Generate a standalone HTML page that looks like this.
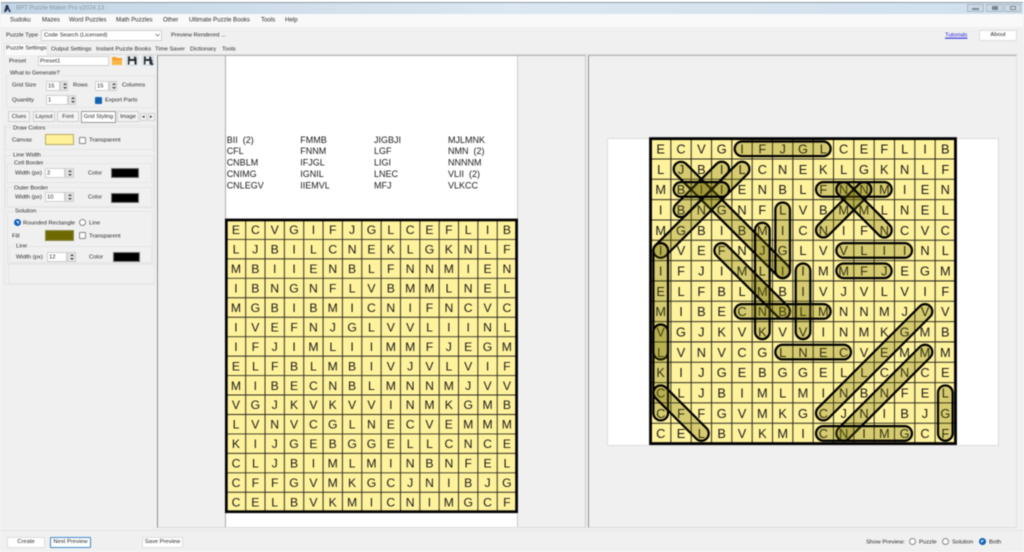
<!DOCTYPE html>
<html><head><meta charset="utf-8"><style>
html,body{margin:0;padding:0}
body{width:1024px;height:552px;overflow:hidden;background:#fff;position:relative;font-family:"Liberation Sans",sans-serif}
#w{position:absolute;left:0;top:0;width:1024px;height:552px;background:#f0f0f0;filter:blur(.45px);overflow:hidden}
#w div{position:absolute;box-sizing:border-box}
.t{white-space:nowrap;font-size:5.9px;line-height:8px;color:#2a2a2a;transform:translateY(.7px)}
.m{font-size:6.1px}
.i{background:#fff;border:1px solid #d0d0d0}
.sp{background:#e4e4e4;border:1px solid #d0d0d0}
.sp:before{content:"";position:absolute;left:2px;top:1px;border:2px solid transparent;border-top:0;border-bottom:2px solid #444}
.sp:after{content:"";position:absolute;left:2px;bottom:1px;border:2px solid transparent;border-bottom:0;border-top:2px solid #444}
.c{width:7px;height:7px;background:#fff;border:1px solid #888;border-radius:1px}
.r{width:7px;height:7px;background:#fff;border:1px solid #888;border-radius:50%}
.on{border:2px solid #0a5fb8;background:#fff}
.on:after{content:"";position:absolute;left:.5px;top:.5px;width:2px;height:2px;border-radius:50%;background:#0a5fb8}
.g{border:1px solid #e6e6e6}
.b{background:#fff;border:1px solid #dcdcdc;border-radius:1px;font-size:5.8px;line-height:9px;text-align:center;color:#2a2a2a;white-space:nowrap}
.k{background:#000;border:1px solid #777}
.st{background:#f4f4f4;border:1px solid #cfcfcf;font-size:5.7px;line-height:10px;text-align:center;color:#2a2a2a;white-space:nowrap}
svg{position:absolute;overflow:visible}
.L{font:63px "Liberation Sans",sans-serif;fill:#1a1a1a;text-anchor:middle}
.W{font:9px "Liberation Sans",sans-serif;fill:#1a1a1a}
.C rect{fill:#6b6800;fill-opacity:.28;stroke:#000;stroke-opacity:1;stroke-width:11}
</style></head><body><div id="w">

<div style="left:0;top:0;width:1024px;height:2px;background:#fff"></div>
<div style="left:1px;top:2px;width:1022px;height:12px;background:linear-gradient(90deg,#c3d5e4,#dbe7f1 50%,#cfe0ed);border-top:1px solid #8f9aa3"></div>
<svg style="left:3px;top:4px" width="10" height="9" viewBox="0 0 10 9"><path d="M1 8L3 1h2l1 3 2 4H6L5 5 3 8z" fill="#2c3350"/></svg>
<div class="t" style="left:16px;top:4px;color:#8b98a2;font-size:6.1px">BPT Puzzle Maker Pro v2024.13</div>
<div style="left:967px;top:4px;width:17px;height:8px;border:1px solid #a9b8c4;background:#cbd9e4"></div>
<div style="left:986px;top:4px;width:17px;height:8px;border:1px solid #a9b8c4;background:#cbd9e4"></div>
<div style="left:1004px;top:4px;width:17px;height:8px;border:1px solid #a9b8c4;background:#cbd9e4"></div>
<div style="left:972px;top:8px;width:7px;height:2px;border:1px solid #808c96"></div>
<div style="left:992px;top:6px;width:6px;height:4px;background:#7a8690"></div>
<div style="left:1010px;top:6px;width:6px;height:4px;border:1px solid #808c96"></div>

<div style="left:1px;top:14px;width:1022px;height:13px;background:#f9f9f9"></div>
<div class="t m" style="left:10px;top:16px">Sudoku</div>
<div class="t m" style="left:42px;top:16px">Mazes</div>
<div class="t m" style="left:69px;top:16px">Word Puzzles</div>
<div class="t m" style="left:116px;top:16px">Math Puzzles</div>
<div class="t m" style="left:163px;top:16px">Other</div>
<div class="t m" style="left:189px;top:16px">Ultimate Puzzle Books</div>
<div class="t m" style="left:261px;top:16px">Tools</div>
<div class="t m" style="left:285px;top:16px">Help</div>

<div class="t" style="left:6px;top:30.5px">Puzzle Type</div>
<div class="i" style="left:41px;top:30px;width:121px;height:10.5px"></div>
<div class="t" style="left:44px;top:31px">Code Search (Licensed)</div>
<svg style="left:155px;top:33px" width="5" height="4" viewBox="0 0 5 4"><path d="M.5 1L2.5 3 4.500 1" fill="none" stroke="#666" stroke-width=".7"/></svg>
<div class="t" style="left:171px;top:30.5px">Preview Rendered ...</div>
<div class="t" style="left:945px;top:31px;color:#1c1cd8;text-decoration:underline">Tutorials</div>
<div class="b" style="left:979px;top:30px;width:38px;height:10.5px">About</div>

<div style="left:4px;top:43px;width:44px;height:12px;background:#fafafa;border:1px solid #e2e2e2;border-bottom:0"></div>
<div class="t" style="left:6px;top:44px">Puzzle Settings</div>
<div class="t" style="left:51px;top:44.5px">Output Settings</div>
<div class="t" style="left:96px;top:44.5px">Instant Puzzle Books</div>
<div class="t" style="left:155px;top:44.5px">Time Saver</div>
<div class="t" style="left:190px;top:44.5px">Dictionary</div>
<div class="t" style="left:222px;top:44.5px">Tools</div>

<div style="left:48px;top:54px;width:969px;height:1px;background:#dcdcdc"></div>

<div class="t" style="left:9px;top:56.5px">Preset</div>
<div class="i" style="left:38px;top:55.5px;width:71px;height:10px"></div>
<div class="t" style="left:40px;top:56.5px">Preset1</div>
<svg style="left:111px;top:55px" width="12" height="11" viewBox="0 0 12 11"><path d="M1 2h4l1 1h5v7H1z" fill="#f2a02a"/><path d="M1 5h10v5H1z" fill="#fbb545"/></svg>
<svg style="left:126px;top:55px" width="12" height="11" viewBox="0 0 12 11"><rect width="12" height="11" rx="2" fill="#d6dde3"/><path d="M2 1.5h7l1.5 1.5v6.500h-8.500z" fill="#262c33"/><rect x="4" y="1.500" width="4" height="2.500" fill="#e5e8eb"/><rect x="3.500" y="6" width="5" height="3.500" fill="#f2f4f5"/></svg>
<svg style="left:142px;top:55px" width="12" height="11" viewBox="0 0 12 11"><rect width="12" height="11" rx="2" fill="#d6dde3"/><path d="M2 1.500h6.500l1 1.500v6.500h-7.500z" fill="#262c33"/><rect x="3.800" y="1.500" width="3.500" height="2.500" fill="#e5e8eb"/><rect x="3.500" y="6" width="4" height="3.500" fill="#f2f4f5"/><path d="M10 5v5M8.500 8.500L10 10l1.500-1.500" stroke="#262c33" fill="none" stroke-width=".8"/></svg>

<div class="g" style="left:6px;top:75px;width:149px;height:33px"></div>
<div class="t" style="left:9px;top:69px;background:#f0f0f0;padding:0 1px">What to Generate?</div>
<div class="t" style="left:12px;top:81px">Grid Size</div>
<div class="i" style="left:46px;top:80.500px;width:14px;height:10px"></div>
<div class="t" style="left:48px;top:81.500px">15</div>
<div class="sp" style="left:60px;top:80.500px;width:8px;height:10px"></div>
<div class="t" style="left:73px;top:81px">Rows</div>
<div class="i" style="left:95px;top:80.500px;width:14px;height:10px"></div>
<div class="t" style="left:97px;top:81.500px">15</div>
<div class="sp" style="left:109px;top:80.500px;width:8px;height:10px"></div>
<div class="t" style="left:122px;top:81px">Columns</div>
<div class="t" style="left:12px;top:95.500px">Quantity</div>
<div class="i" style="left:46px;top:95px;width:22px;height:10px"></div>
<div class="t" style="left:48px;top:96px">1</div>
<div class="sp" style="left:68px;top:95px;width:8px;height:10px"></div>
<div style="left:95px;top:96.500px;width:7px;height:7px;background:#1464b4;border-radius:1px"></div>
<div class="t" style="left:105px;top:95.500px">Export Parts</div>

<div class="st" style="left:8px;top:111px;width:22px;height:11px">Clues</div>
<div class="st" style="left:33px;top:111px;width:22px;height:11px">Layout</div>
<div class="st" style="left:57px;top:111px;width:22px;height:11px">Font</div>
<div class="st" style="left:81px;top:110.500px;width:35px;height:12px;background:#fff;border-color:#9a9a9a">Grid Styling</div>
<div class="st" style="left:117px;top:111px;width:22px;height:11px">Image</div>
<div class="st" style="left:140px;top:113px;width:6.500px;height:8px;line-height:7px;font-size:5px">◂</div>
<div class="st" style="left:148px;top:113px;width:6.500px;height:8px;line-height:7px;font-size:5px">▸</div>

<div class="g" style="left:4px;top:125px;width:151px;height:160px"></div>
<div class="g" style="left:5px;top:127px;width:149px;height:23px"></div>
<div class="t" style="left:12px;top:123.500px;background:#f0f0f0;padding:0 1px">Draw Colors</div>
<div class="t" style="left:12px;top:136px">Canvas</div>
<div style="left:45px;top:134px;width:29px;height:11px;background:#fff09a;border:1px solid #b9a96a"></div>
<div class="c" style="left:79px;top:136.500px"></div>
<div class="t" style="left:89px;top:136px">Transparent</div>

<div class="g" style="left:5px;top:155px;width:149px;height:53px"></div>
<div class="t" style="left:12px;top:150.500px;background:#f0f0f0;padding:0 1px">Line Width</div>
<div class="g" style="left:7px;top:163px;width:145px;height:20px"></div>
<div class="t" style="left:13px;top:159px;background:#f0f0f0;padding:0 1px">Cell Border</div>
<div class="t" style="left:15px;top:169px">Width (px)</div>
<div class="i" style="left:45px;top:168px;width:20px;height:10px"></div>
<div class="t" style="left:47px;top:169px">2</div>
<div class="sp" style="left:65px;top:168px;width:9px;height:10px"></div>
<div class="t" style="left:88px;top:169px">Color</div>
<div class="k" style="left:111px;top:168px;width:28px;height:10px"></div>
<div class="g" style="left:7px;top:187px;width:145px;height:20px"></div>
<div class="t" style="left:13px;top:183.500px;background:#f0f0f0;padding:0 1px">Outer Border</div>
<div class="t" style="left:15px;top:193px">Width (px)</div>
<div class="i" style="left:45px;top:192px;width:20px;height:10px"></div>
<div class="t" style="left:47px;top:193px">10</div>
<div class="sp" style="left:65px;top:192px;width:9px;height:10px"></div>
<div class="t" style="left:88px;top:193px">Color</div>
<div class="k" style="left:111px;top:192.500px;width:28px;height:10px"></div>

<div class="g" style="left:7px;top:211px;width:146px;height:53px"></div>
<div class="t" style="left:14px;top:207px;background:#f0f0f0;padding:0 1px">Solution</div>
<div class="r on" style="left:13.500px;top:219px"></div>
<div class="t" style="left:23px;top:219px">Rounded Rectangle</div>
<div class="r" style="left:79px;top:219px"></div>
<div class="t" style="left:89px;top:219px">Line</div>
<div class="t" style="left:12px;top:232px">Fill</div>
<div style="left:45px;top:230px;width:29px;height:11px;background:#6f6a00;border:1px solid #8a8a50"></div>
<div class="c" style="left:79px;top:232px"></div>
<div class="t" style="left:89px;top:232px">Transparent</div>
<div class="g" style="left:9px;top:246px;width:143px;height:17px"></div>
<div class="t" style="left:15px;top:242px;background:#f0f0f0;padding:0 1px">Line</div>
<div class="t" style="left:16px;top:252.500px">Width (px)</div>
<div class="i" style="left:47px;top:251.500px;width:20px;height:10px"></div>
<div class="t" style="left:49px;top:252.500px">12</div>
<div class="sp" style="left:67px;top:251.500px;width:9px;height:10px"></div>
<div class="t" style="left:89px;top:252.500px">Color</div>
<div class="k" style="left:113px;top:251.500px;width:27px;height:10px"></div>
<div class="g" style="left:8px;top:264px;width:147px;height:20px"></div>

<div style="left:157px;top:55px;width:429px;height:473px;border-left:1px solid #8c8c8c;border-top:1px solid #b0b0b0;border-right:1px solid #c8c8c8;border-bottom:1px solid #dcdcdc"></div>
<div style="left:588px;top:55px;width:429px;height:473px;border-left:1px solid #8c8c8c;border-top:1px solid #b0b0b0;border-right:1px solid #e2e2e2;border-bottom:1px solid #dcdcdc"></div>

<div style="left:225px;top:56px;width:293px;height:471px;background:#fff;border-left:1px solid #aaa;border-right:1px solid #ccc"></div>
<div style="left:607px;top:138px;width:392px;height:308px;background:#fff;border:1px solid #ddd"></div>

<svg style="left:0;top:0" width="1024" height="552">
<g class="W">
<text x="226.700" y="142.800">BII&#160; (2)</text><text x="226.700" y="154.200">CFL</text><text x="226.700" y="165.600">CNBLM</text><text x="226.700" y="177">CNIMG</text><text x="226.700" y="188.400">CNLEGV</text>
<text x="300.300" y="142.800">FMMB</text><text x="300.300" y="154.200">FNNM</text><text x="300.300" y="165.600">IFJGL</text><text x="300.300" y="177">IGNIL</text><text x="300.300" y="188.400">IIEMVL</text>
<text x="374" y="142.800">JIGBJI</text><text x="374" y="154.200">LGF</text><text x="374" y="165.600">LIGI</text><text x="374" y="177">LNEC</text><text x="374" y="188.400">MFJ</text>
<text x="448" y="142.800">MJLMNK</text><text x="448" y="154.200">NMN&#160; (2)</text><text x="448" y="165.600">NNNNM</text><text x="448" y="177">VLII&#160; (2)</text><text x="448" y="188.400">VLKCC</text>
</g>

<g transform="translate(236 229.700) scale(.1935 .1945)">
<rect x="-50" y="-50" width="1500" height="1500" fill="#fff29c"/>
<path d="M50-50V1450M150-50V1450M250-50V1450M350-50V1450M450-50V1450M550-50V1450M650-50V1450M750-50V1450M850-50V1450M950-50V1450M1050-50V1450M1150-50V1450M1250-50V1450M1350-50V1450M-50 50H1450M-50 150H1450M-50 250H1450M-50 350H1450M-50 450H1450M-50 550H1450M-50 650H1450M-50 750H1450M-50 850H1450M-50 950H1450M-50 1050H1450M-50 1150H1450M-50 1250H1450M-50 1350H1450" stroke="#2c2c20" stroke-width="5" fill="none"/>
<rect x="-50" y="-50" width="1500" height="1500" fill="none" stroke="#000" stroke-width="14"/>
<g class="L">
<text x="0 100 200 300 400 500 600 700 800 900 1000 1100 1200 1300 1400" y="23">ECVGIFJGLCEFLIB</text>
<text x="0 100 200 300 400 500 600 700 800 900 1000 1100 1200 1300 1400" y="123">LJBILCNEKLGKNLF</text>
<text x="0 100 200 300 400 500 600 700 800 900 1000 1100 1200 1300 1400" y="223">MBIIENBLFNNMIEN</text>
<text x="0 100 200 300 400 500 600 700 800 900 1000 1100 1200 1300 1400" y="323">IBNGNFLVBMMLNEL</text>
<text x="0 100 200 300 400 500 600 700 800 900 1000 1100 1200 1300 1400" y="423">MGBIBMICNIFNCVC</text>
<text x="0 100 200 300 400 500 600 700 800 900 1000 1100 1200 1300 1400" y="523">IVEFNJGLVVLIINL</text>
<text x="0 100 200 300 400 500 600 700 800 900 1000 1100 1200 1300 1400" y="623">IFJIMLIIMMFJEGM</text>
<text x="0 100 200 300 400 500 600 700 800 900 1000 1100 1200 1300 1400" y="723">ELFBLMBIVJVLVIF</text>
<text x="0 100 200 300 400 500 600 700 800 900 1000 1100 1200 1300 1400" y="823">MIBECNBLMNNMJVV</text>
<text x="0 100 200 300 400 500 600 700 800 900 1000 1100 1200 1300 1400" y="923">VGJKVKVVINMKGMB</text>
<text x="0 100 200 300 400 500 600 700 800 900 1000 1100 1200 1300 1400" y="1023">LVNVCGLNECVEMMM</text>
<text x="0 100 200 300 400 500 600 700 800 900 1000 1100 1200 1300 1400" y="1123">KIJGEBGGELLCNCE</text>
<text x="0 100 200 300 400 500 600 700 800 900 1000 1100 1200 1300 1400" y="1223">CLJBIMLMINBNFEL</text>
<text x="0 100 200 300 400 500 600 700 800 900 1000 1100 1200 1300 1400" y="1323">CFFGVMKGCJNIBJG</text>
<text x="0 100 200 300 400 500 600 700 800 900 1000 1100 1200 1300 1400" y="1423">CELBVKMICNIMGCF</text>
</g>
</g>

<g transform="translate(660.700 148.800) scale(.2033)">
<rect x="-50" y="-50" width="1500" height="1500" fill="#fff29c"/>
<path d="M50-50V1450M150-50V1450M250-50V1450M350-50V1450M450-50V1450M550-50V1450M650-50V1450M750-50V1450M850-50V1450M950-50V1450M1050-50V1450M1150-50V1450M1250-50V1450M1350-50V1450M-50 50H1450M-50 150H1450M-50 250H1450M-50 350H1450M-50 450H1450M-50 550H1450M-50 650H1450M-50 750H1450M-50 850H1450M-50 950H1450M-50 1050H1450M-50 1150H1450M-50 1250H1450M-50 1350H1450" stroke="#2c2c20" stroke-width="5" fill="none"/>
<rect x="-50" y="-50" width="1500" height="1500" fill="none" stroke="#000" stroke-width="14"/>
<g class="L">
<text x="0 100 200 300 400 500 600 700 800 900 1000 1100 1200 1300 1400" y="23">ECVGIFJGLCEFLIB</text>
<text x="0 100 200 300 400 500 600 700 800 900 1000 1100 1200 1300 1400" y="123">LJBILCNEKLGKNLF</text>
<text x="0 100 200 300 400 500 600 700 800 900 1000 1100 1200 1300 1400" y="223">MBIIENBLFNNMIEN</text>
<text x="0 100 200 300 400 500 600 700 800 900 1000 1100 1200 1300 1400" y="323">IBNGNFLVBMMLNEL</text>
<text x="0 100 200 300 400 500 600 700 800 900 1000 1100 1200 1300 1400" y="423">MGBIBMICNIFNCVC</text>
<text x="0 100 200 300 400 500 600 700 800 900 1000 1100 1200 1300 1400" y="523">IVEFNJGLVVLIINL</text>
<text x="0 100 200 300 400 500 600 700 800 900 1000 1100 1200 1300 1400" y="623">IFJIMLIIMMFJEGM</text>
<text x="0 100 200 300 400 500 600 700 800 900 1000 1100 1200 1300 1400" y="723">ELFBLMBIVJVLVIF</text>
<text x="0 100 200 300 400 500 600 700 800 900 1000 1100 1200 1300 1400" y="823">MIBECNBLMNNMJVV</text>
<text x="0 100 200 300 400 500 600 700 800 900 1000 1100 1200 1300 1400" y="923">VGJKVKVVINMKGMB</text>
<text x="0 100 200 300 400 500 600 700 800 900 1000 1100 1200 1300 1400" y="1023">LVNVCGLNECVEMMM</text>
<text x="0 100 200 300 400 500 600 700 800 900 1000 1100 1200 1300 1400" y="1123">KIJGEBGGELLCNCE</text>
<text x="0 100 200 300 400 500 600 700 800 900 1000 1100 1200 1300 1400" y="1223">CLJBIMLMINBNFEL</text>
<text x="0 100 200 300 400 500 600 700 800 900 1000 1100 1200 1300 1400" y="1323">CFFGVMKGCJNIBJG</text>
<text x="0 100 200 300 400 500 600 700 800 900 1000 1100 1200 1300 1400" y="1423">CELBVKMICNIMGCF</text>
</g>
<g class="C">
<rect x="364" y="-36" width="472" height="72" rx="36"/>
<rect x="64" y="64" width="779" height="72" rx="36" transform="rotate(45 100 100)"/>
<rect x="-36" y="464" width="638" height="72" rx="36" transform="rotate(-45 0 500)"/>
<rect x="64" y="264" width="355" height="72" rx="36" transform="rotate(-45 100 300)"/>
<rect x="64" y="164" width="272" height="72" rx="36"/>
<rect x="-36" y="464" width="72" height="572" rx="36"/>
<rect x="-36" y="864" width="72" height="472" rx="36"/>
<rect x="-36" y="1164" width="355" height="72" rx="36" transform="rotate(45 0 1200)"/>
<rect x="564" y="264" width="72" height="372" rx="36"/>
<rect x="464" y="364" width="72" height="572" rx="36"/>
<rect x="264" y="464" width="496" height="72" rx="36" transform="rotate(45 300 500)"/>
<rect x="664" y="564" width="72" height="372" rx="36"/>
<rect x="364" y="764" width="472" height="72" rx="36"/>
<rect x="764" y="164" width="372" height="72" rx="36"/>
<rect x="764" y="364" width="355" height="72" rx="36" transform="rotate(-45 800 400)"/>
<rect x="864" y="164" width="355" height="72" rx="36" transform="rotate(45 900 200)"/>
<rect x="864" y="464" width="372" height="72" rx="36"/>
<rect x="864" y="564" width="272" height="72" rx="36"/>
<rect x="564" y="964" width="372" height="72" rx="36"/>
<rect x="764" y="1264" width="779" height="72" rx="36" transform="rotate(-45 800 1300)"/>
<rect x="864" y="1364" width="638" height="72" rx="36" transform="rotate(-45 900 1400)"/>
<rect x="764" y="1364" width="472" height="72" rx="36"/>
<rect x="1364" y="1164" width="72" height="272" rx="36"/>
</g>
</g>
</svg>

<div style="left:0;top:530px;width:1024px;height:1px;background:#e4e4e4"></div>
<div class="b" style="left:7px;top:537px;width:38px;height:10.500px">Create</div>
<div class="b" style="left:50px;top:536.500px;width:41px;height:11px;border:1px solid #3d86c6">Next Preview</div>
<div class="b" style="left:142px;top:537px;width:41px;height:10.500px">Save Preview</div>
<div class="t" style="left:866px;top:538px">Show Preview:</div>
<div class="r" style="left:909px;top:538px"></div>
<div class="t" style="left:919px;top:538px">Puzzle</div>
<div class="r" style="left:942px;top:538px"></div>
<div class="t" style="left:952px;top:538px">Solution</div>
<div class="r on" style="left:979px;top:538px"></div>
<div class="t" style="left:989px;top:538px">Both</div>
</div></body></html>
